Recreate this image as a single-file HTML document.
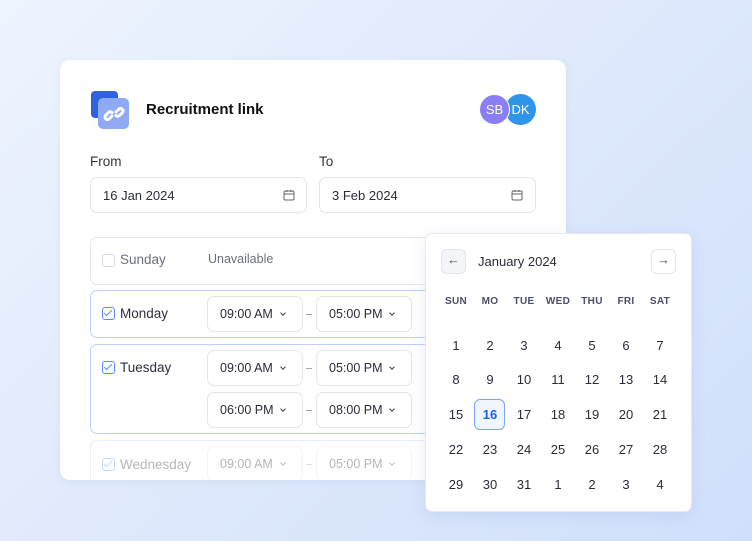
<!DOCTYPE html><html><head><style>
*{box-sizing:border-box;margin:0;padding:0}
body{width:752px;height:541px;overflow:hidden;font-family:"Liberation Sans",sans-serif;background:linear-gradient(135deg,#eef4fe 0%,#dfe9fc 50%,#d0e0fb 100%);position:relative;color:#1d1f2c}
.card{position:absolute;left:60px;top:60px;width:506px;height:420px;background:#fff;border-radius:10px;overflow:hidden;box-shadow:0 2px 8px rgba(80,110,180,.08)}
.abs{position:absolute}
.inp{position:absolute;height:36px;border:1px solid #e3e5ec;border-radius:7px;font-size:13px;display:flex;align-items:center;padding-left:12px;color:#2a2c38}
.row{position:absolute;left:30px;width:500px;border:1px solid #e5e7ee;border-radius:7px}
.row.on{border-color:#bcd0fb}
.cb{position:absolute;width:13px;height:13px;border:1.3px solid #d6d8e0;border-radius:3px}
.cb.on{border-color:#5b8af5}
.cb.on:after{content:"";position:absolute;left:3px;top:0px;width:3px;height:7px;border:solid #5b8af5;border-width:0 1.4px 1.4px 0;transform:rotate(45deg)}
.dn{position:absolute;font-size:13.5px;color:#2d2f3c}
.sel{position:absolute;width:96px;height:36px;border:1px solid #e3e5ec;border-radius:7px;font-size:12.5px;padding-left:12px;display:flex;align-items:center;color:#2a2c38}
.sel:after{content:"";position:absolute;right:17px;top:14px;width:3px;height:3px;border:solid #444;border-width:0 1.2px 1.2px 0;transform:rotate(45deg)}
.dash{position:absolute;width:6px;height:1px;background:#aaa}
.cal{position:absolute;left:425px;top:233px;width:267px;height:279px;background:#fff;border-radius:7px;border:1px solid #e6e9f2;box-shadow:0 4px 16px rgba(80,110,180,.12)}
.nb{position:absolute;top:15px;width:25px;height:25px;border:1px solid #e3e5ec;border-radius:6px;font-size:13px;line-height:20px;text-align:center;color:#555}
.wd{position:absolute;top:62px;width:34px;margin-left:-17px;text-align:center;font-size:10px;font-weight:bold;color:#4a4e68;letter-spacing:.3px}
.d{position:absolute;width:34px;margin-left:-17px;text-align:center;font-size:13px;color:#2a2c38}
</style></head><body>
<div class="card">
 <div class="abs" style="left:31px;top:31px;width:27px;height:27px;background:#2f62e0;border-radius:4px"></div>
 <div class="abs" style="left:38px;top:38px;width:31px;height:31px;background:#8fa9f2;border-radius:5px"></div>
 <svg class="abs" style="left:42px;top:42px" width="24" height="24" viewBox="0 0 24 24"><g fill="none" stroke="#fff" stroke-width="3" stroke-linecap="round"><path d="M10 14l-3 3a2.5 2.5 0 0 1-3.5-3.5l3-3a2.5 2.5 0 0 1 3.5 0"/><path d="M14 10l3-3a2.5 2.5 0 0 1 3.5 3.5l-3 3a2.5 2.5 0 0 1-3.5 0"/></g></svg>
 <div class="abs" style="left:86px;top:41px;font-size:15px;font-weight:bold;color:#111">Recruitment link</div>
 <div class="abs" style="left:445px;top:34px;width:31px;height:31px;border-radius:50%;background:#2f95e8;color:#fff;font-size:13px;display:flex;align-items:center;justify-content:center">DK</div>
 <div class="abs" style="left:419px;top:34px;width:31px;height:31px;border-radius:50%;background:#8a7df5;color:#fff;font-size:13px;display:flex;align-items:center;justify-content:center;border:1px solid #fff">SB</div>
 <div class="abs" style="left:30px;top:94px;font-size:13.5px;color:#333">From</div>
 <div class="abs" style="left:259px;top:94px;font-size:13.5px;color:#333">To</div>
 <div class="inp" style="left:30px;top:117px;width:217px">16 Jan 2024</div>
 <div class="inp" style="left:259px;top:117px;width:217px">3 Feb 2024</div>
 <svg class="abs" style="left:223px;top:129px" width="12" height="12" viewBox="0 0 12 12"><rect x="1" y="2" width="10" height="9" rx="1.5" fill="none" stroke="#666"/><path d="M1 5h10M4 1v2M8 1v2" stroke="#666"/></svg>
 <svg class="abs" style="left:451px;top:129px" width="12" height="12" viewBox="0 0 12 12"><rect x="1" y="2" width="10" height="9" rx="1.5" fill="none" stroke="#666"/><path d="M1 5h10M4 1v2M8 1v2" stroke="#666"/></svg>

 <div class="row" style="top:177px;height:48px"></div>
 <div class="cb" style="left:42px;top:194px"></div>
 <div class="dn" style="left:60px;top:192px;color:#6b6e80">Sunday</div>
 <div class="abs" style="left:148px;top:192px;font-size:12.5px;color:#6b6e80">Unavailable</div>

 <div class="row on" style="top:230px;height:48px"></div>
 <div class="cb on" style="left:42px;top:247px"></div>
 <div class="dn" style="left:60px;top:246px">Monday</div>
 <div class="sel" style="left:147px;top:236px">09:00 AM</div><div class="dash" style="left:246px;top:254px"></div><div class="sel" style="left:256px;top:236px">05:00 PM</div>

 <div class="row on" style="top:284px;height:90px"></div>
 <div class="cb on" style="left:42px;top:301px"></div>
 <div class="dn" style="left:60px;top:300px">Tuesday</div>
 <div class="sel" style="left:147px;top:290px">09:00 AM</div><div class="dash" style="left:246px;top:308px"></div><div class="sel" style="left:256px;top:290px">05:00 PM</div>
 <div class="sel" style="left:147px;top:332px">06:00 PM</div><div class="dash" style="left:246px;top:350px"></div><div class="sel" style="left:256px;top:332px">08:00 PM</div>

 <div style="opacity:.35">
 <div class="row on" style="top:380px;height:60px"></div>
 <div class="cb on" style="left:42px;top:398px"></div>
 <div class="dn" style="left:60px;top:397px">Wednesday</div>
 <div class="sel" style="left:147px;top:386px">09:00 AM</div><div class="dash" style="left:246px;top:404px"></div><div class="sel" style="left:256px;top:386px">05:00 PM</div>
 </div>
</div>
<div class="cal">
 <div class="nb" style="left:15px;background:#f4f5f9">←</div>
 <div class="abs" style="left:52px;top:20px;font-size:13px;color:#2a2c38">January 2024</div>
 <div class="nb" style="left:225px">→</div>
 <div class="wd" style="left:30px">SUN</div><div class="wd" style="left:64px">MO</div><div class="wd" style="left:98px">TUE</div><div class="wd" style="left:132px">WED</div><div class="wd" style="left:166px">THU</div><div class="wd" style="left:200px">FRI</div><div class="wd" style="left:234px">SAT</div>
 <div class="abs" style="left:48px;top:165px;width:31px;height:31px;border:1.5px solid #7ea4f5;border-radius:6px;background:#f0f6ff"></div>
 <div id="g"></div>
</div>
<script>
var days=[1,2,3,4,5,6,7,8,9,10,11,12,13,14,15,16,17,18,19,20,21,22,23,24,25,26,27,28,29,30,31,1,2,3,4];
var tops=[104,138,173,208,243],h="";
days.forEach(function(d,i){var r=Math.floor(i/7),c=i%7;h+='<div class="d" style="left:'+(30+34*c)+'px;top:'+tops[r]+'px;'+(i==15?'color:#1d63e8;font-weight:bold':'')+'">'+d+'</div>';});
document.getElementById('g').outerHTML=h;
</script>
</body></html>
